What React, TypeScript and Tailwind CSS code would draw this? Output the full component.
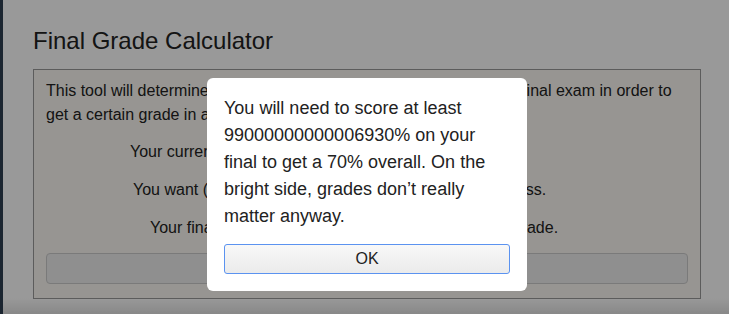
import React from "react";

const font = { fontFamily: '"Liberation Sans", Arial, sans-serif' };

export default function App() {
  return (
    <div className="relative w-[729px] h-[314px] overflow-hidden bg-white flex" style={font}>
      <div className="w-[3px] h-full bg-[#2d3e50]" />
      <div className="flex-1 flex flex-col pl-[30px] pr-[28px] bg-gradient-to-b from-white from-[95%] to-[#e3e3e3]">
        <h1 className="text-[24px] leading-[28px] text-[#222] pt-[27px] pb-[14px]">Final Grade Calculator</h1>
        <div className="border border-[#999] bg-[#fcf9f3] px-[12px] pt-[9px] pb-[12px] h-[230px] text-[16px] text-[#222]">
          <p className="leading-[24px]">
            This tool will determine the minimum score that you'll need on your final exam in order to get a certain grade in a class.
          </p>
          <div className="flex flex-col gap-[12px] mt-[12px] leading-[26px]">
            <div className="pl-[84px] flex items-center">
              Your current grade is
              <span className="inline-block w-[200px] h-[26px] border border-[#ccc] rounded-[3px] bg-white mx-1" />%.
            </div>
            <div className="pl-[87px] flex items-center">
              You want (at least)
              <span className="inline-block w-[170px] h-[26px] border border-[#ccc] rounded-[3px] bg-white mx-1" />
              % in the class.
            </div>
            <div className="pl-[104px] flex items-center">
              Your final is worth
              <span className="inline-block w-[157px] h-[26px] border border-[#ccc] rounded-[3px] bg-white mx-1" />
              % of your grade.
            </div>
          </div>
          <button className="mt-[12px] w-full h-[31px] rounded-[4px] border border-[#ccc] bg-[#eeeeee] text-[16px]">
            Calculate
          </button>
        </div>
      </div>

      <div className="absolute inset-0 bg-black/40" />

      <div className="absolute left-[207px] top-[78px] w-[320px] h-[213px] bg-white rounded-[6px] px-[17px] pt-[17px]">
        <p className="text-[18px] leading-[27px] text-[#222]">
          You will need to score at least 99000000000006930% on your final to get a 70% overall. On the bright side, grades don’t really matter anyway.
        </p>
        <button className="mt-[14px] w-[286px] h-[30px] rounded-[3px] border border-[#5b93f0] bg-gradient-to-b from-[#f8f8f8] to-[#ebebeb] text-[16px] text-[#222]">
          OK
        </button>
      </div>
    </div>
  );
}
